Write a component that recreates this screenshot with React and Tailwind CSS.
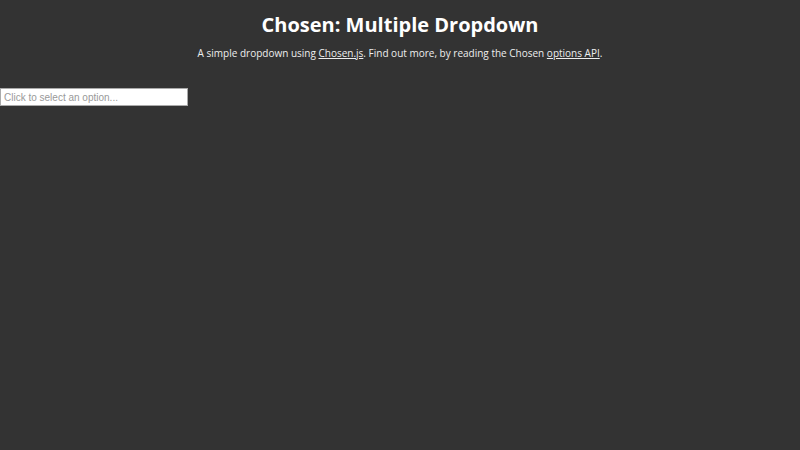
export default function App() {
  return (
    <div className="min-h-[450px] w-full bg-[#333333] text-white" style={{ fontFamily: '"Open Sans", sans-serif' }}>
      <div className="pt-[9px] text-center">
        <h1 className="text-[20px] font-bold leading-[32px]">Chosen: Multiple Dropdown</h1>
        <p className="mt-[3px] text-[10px] leading-[18px] text-[#eeeeee]">
          A simple dropdown using <a className="underline">Chosen.js</a>. Find out more, by reading the Chosen{" "}
          <a className="underline">options API</a>.
        </p>
      </div>
      <div className="mt-[26px]">
        <div className="flex h-[18px] w-[188px] items-center border border-[#aaaaaa] bg-white px-[3px]">
          <span className="text-[10px] text-[#999999]" style={{ fontFamily: '"Liberation Sans", Arial, sans-serif' }}>
            Click to select an option...
          </span>
        </div>
      </div>
    </div>
  );
}
